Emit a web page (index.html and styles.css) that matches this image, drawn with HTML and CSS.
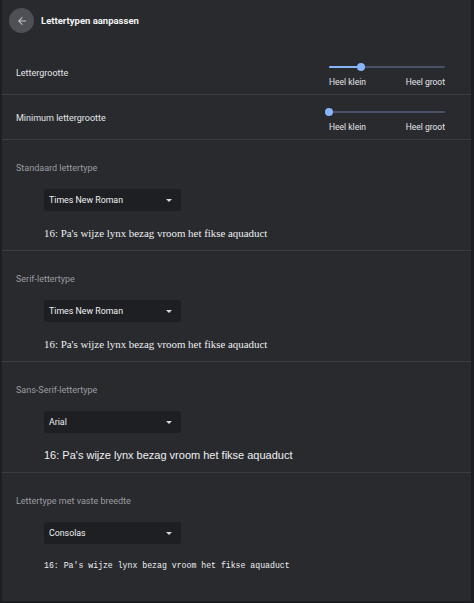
FILE: index.html
```html
<!DOCTYPE html>
<html lang="nl">
<head>
<meta charset="utf-8">
<title>Lettertypen aanpassen</title>
<link rel="stylesheet" href="styles.css">
</head>
<body>
<div class="page">
  <header class="header">
    <button class="back" aria-label="Terug">
      <svg width="12" height="12" viewBox="0 0 24 24"><path d="M20 11H7.83l5.59-5.59L12 4l-8 8 8 8 1.41-1.41L7.83 13H20v-2z" fill="#c4c6ca"/></svg>
    </button>
    <h1 class="title">Lettertypen aanpassen</h1>
  </header>

  <div class="row">
    <div class="row-label">Lettergrootte</div>
    <div class="slider">
      <div class="track"><div class="fill" style="width:28%"></div><div class="thumb" style="left:28%"></div></div>
      <div class="ticks"><span>Heel klein</span><span>Heel groot</span></div>
    </div>
  </div>
  <div class="row">
    <div class="row-label">Minimum lettergrootte</div>
    <div class="slider">
      <div class="track"><div class="fill" style="width:0%"></div><div class="thumb" style="left:0%"></div></div>
      <div class="ticks"><span>Heel klein</span><span>Heel groot</span></div>
    </div>
  </div>

  <section class="section">
    <div class="section-title">Standaard lettertype</div>
    <div class="select"><span>Times New Roman</span><i class="caret"></i></div>
    <div class="sample serif">16: Pa's wijze lynx bezag vroom het fikse aquaduct</div>
  </section>
  <section class="section">
    <div class="section-title">Serif-lettertype</div>
    <div class="select"><span>Times New Roman</span><i class="caret"></i></div>
    <div class="sample serif">16: Pa's wijze lynx bezag vroom het fikse aquaduct</div>
  </section>
  <section class="section">
    <div class="section-title">Sans-Serif-lettertype</div>
    <div class="select"><span>Arial</span><i class="caret"></i></div>
    <div class="sample sans">16: Pa's wijze lynx bezag vroom het fikse aquaduct</div>
  </section>
  <section class="section last">
    <div class="section-title">Lettertype met vaste breedte</div>
    <div class="select"><span>Consolas</span><i class="caret"></i></div>
    <div class="sample mono">16: Pa's wijze lynx bezag vroom het fikse aquaduct</div>
  </section>
</div>
</body>
</html>
```

FILE: styles.css
```css
* { box-sizing: border-box; }
html, body { margin: 0; padding: 0; background: #1b1c1f; }
body { font-family: Roboto, "Noto Sans", "Liberation Sans", sans-serif; color: #e8eaed; }

.page {
  width: 474px;
  height: 601px;
  background: #292a2e;
  border-left: 2px solid #1d1e21;
  border-right: 3px solid #1d1e21;
  overflow: hidden;
}

.header {
  height: 40px;
  display: flex;
  align-items: center;
  padding-left: 7px;
  margin-bottom: 10px;
}
.back {
  width: 25px; height: 25px;
  border-radius: 50%;
  border: 0;
  background: #4f5055;
  display: flex; align-items: center; justify-content: center;
  padding: 0;
  margin-top: 1px;
}
.title {
  margin: 0 0 0 7px;
  font-size: 9.5px;
  font-weight: 700;
  color: #f1f3f4;
}

.row {
  height: 45px;
  display: flex;
  align-items: center;
  justify-content: space-between;
  padding: 0 26px 0 14px;
  border-bottom: 1px solid #3b3c40;
}
.row-label { font-size: 9px; color: #e3e5e8; margin-top: 1px; }

.slider { width: 116px; padding-top: 8px; }
.track {
  position: relative;
  height: 2px;
  background: #4a5068;
  border-radius: 1px;
}
.fill { height: 2px; background: #8ab4f8; border-radius: 1px; }
.thumb {
  position: absolute;
  top: -3px;
  width: 8px; height: 8px;
  margin-left: -4px;
  border-radius: 50%;
  background: #8ab4f8;
}
.ticks {
  display: flex;
  justify-content: space-between;
  font-size: 8.5px;
  color: #e3e5e8;
  margin-top: 9px;
}

.section {
  height: 111px;
  padding: 22px 14px 0;
  border-bottom: 1px solid #3b3c40;
}
.section.last { border-bottom: 0; height: 130px; }
.section-title {
  font-size: 9px;
  line-height: 12px;
  color: #9a9ca1;
}
.select {
  margin: 15px 0 0 28px;
  width: 137px;
  height: 22px;
  background: #1e1f22;
  border-radius: 3px;
  display: flex;
  align-items: center;
  justify-content: space-between;
  padding: 0 9px 0 5px;
  font-size: 8.8px;
  color: #eef0f2;
}
.caret {
  width: 0; height: 0;
  border-left: 3.5px solid transparent;
  border-right: 3.5px solid transparent;
  border-top: 3.5px solid #d5d7da;
}
.sample {
  margin: 14px 0 0 28px;
  line-height: 16px;
  color: #eef0f2;
  white-space: nowrap;
}
.serif { font-family: "Liberation Serif", serif; font-size: 10.9px; }
.sans { font-family: "Liberation Sans", Arial, sans-serif; font-size: 11px; }
.mono { font-family: "Liberation Mono", monospace; font-size: 8.2px; }
```
